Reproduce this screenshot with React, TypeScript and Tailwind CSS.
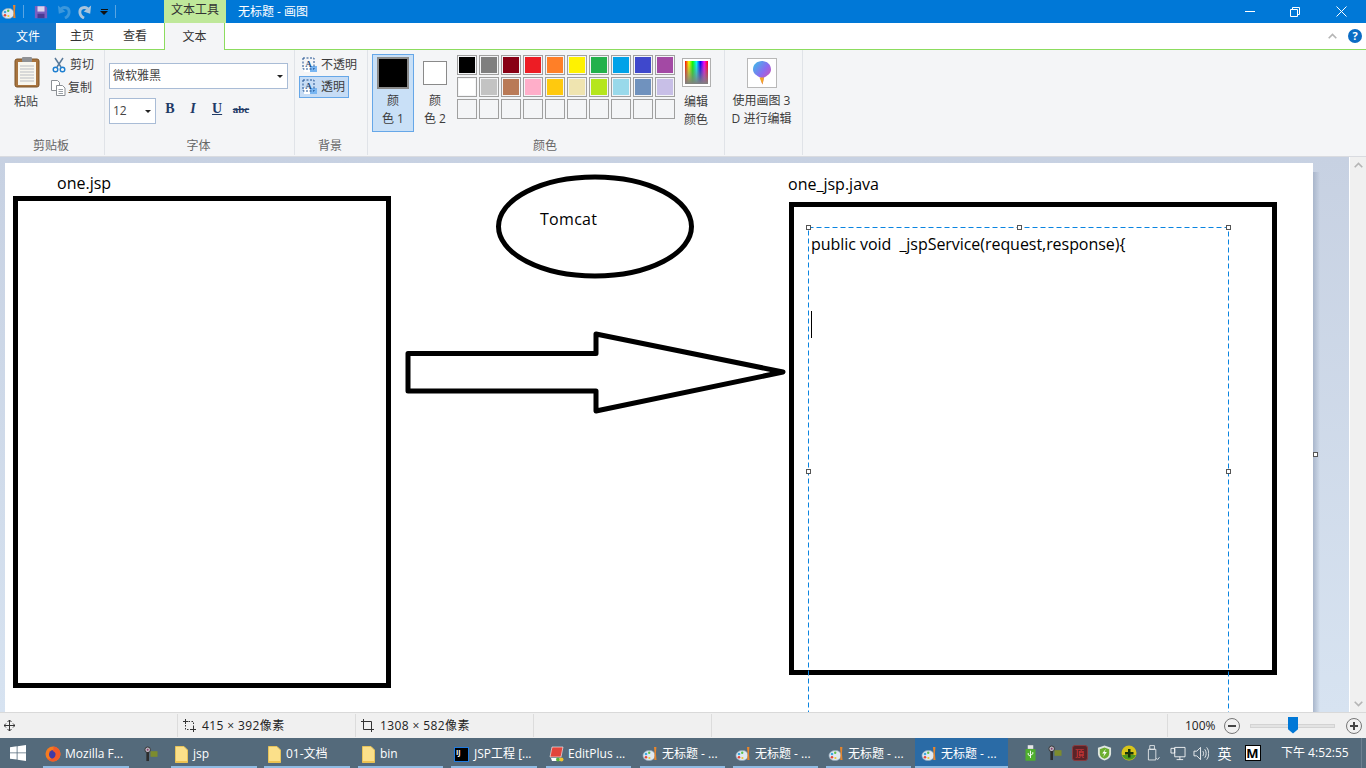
import React from 'react'

const font = 'font-["Open_Sans","Noto_Sans_CJK_SC",sans-serif]'

const paletteColors = [
  ['#000000', '#7f7f7f', '#880015', '#ed1c24', '#ff7f27', '#fff200', '#22b14c', '#00a2e8', '#3f48cc', '#a349a4'],
  ['#ffffff', '#c3c3c3', '#b97a57', '#ffaec9', '#ffc90e', '#efe4b0', '#b5e61d', '#99d9ea', '#7092be', '#c8bfe7'],
  ['', '', '', '', '', '', '', '', '', ''],
]

function PaintIcon({ className }: { className?: string }) {
  return (
    <svg viewBox="0 0 16 16" className={className}>
      <path d="M1 9.500C1 6.500 4 4.500 7.500 4.500S13 6.500 13 9.500 10.500 14.500 7 14.500 1 12.500 1 9.500z" fill="#dfe9f2" stroke="#8ea3b5" strokeWidth="0.7" />
      <circle cx="4" cy="8" r="1.3" fill="#3fa9e0" />
      <circle cx="7.2" cy="6.8" r="1.2" fill="#5fbf4a" />
      <circle cx="4" cy="11.2" r="1.3" fill="#e2483d" />
      <circle cx="7.4" cy="12" r="1.1" fill="#f0c330" />
      <path d="M12 1h2.400l-.5 6.500 .6 6.500h-2.200l.3-6.500z" fill="#e8862c" />
    </svg>
  )
}

function FolderIcon() {
  return (
    <svg viewBox="0 0 13 17" className="w-[13px] h-[17px]">
      <path d="M.5.5h8.500l3.500 3.500v12.500H.5z" fill="#fbe08a" stroke="#e6c25a" />
      <path d="M.5 15h12v1.500H.5z" fill="#eec24f" />
    </svg>
  )
}

function KeyIcon() {
  return (
    <svg viewBox="0 0 16 16" className="w-[15px] h-[16px]">
      <circle cx="5" cy="3.500" r="3" fill="#bdb6c0" stroke="#333" />
      <rect x="3.600" y="6" width="2.800" height="9.500" fill="#2c2c2c" />
      <rect x="8" y="5" width="7.500" height="6" fill="#7d8c2e" />
      <circle cx="5" cy="3.500" r="1" fill="#8a3d6b" />
    </svg>
  )
}

function ChevronIcon({ down, className }: { down?: boolean; className?: string }) {
  return (
    <svg viewBox="0 0 9 6" className={className}>
      <path d={down ? 'M.7 .8 4.500 4.600 8.300 .8' : 'M.7 5.200 4.500 1.400 8.300 5.200'} fill="none" stroke="#b5b5b5" strokeWidth="1.6" />
    </svg>
  )
}

function UndoIcon({ color, className }: { color: string; className: string }) {
  return (
    <svg viewBox="0 0 14 16" className={className}>
      <path d="M4 5c4-2.500 8.500-1 8.500 3.500 0 3-1.500 5-4.500 6.500" fill="none" stroke={color} strokeWidth="3" />
      <path d="M.5 1.500l1 9 7-2.500z" fill={color} />
    </svg>
  )
}

function Combo({ className, label }: { className: string; label: string }) {
  return (
    <div className={`flex items-center justify-between bg-white border border-[#a9bcd6] text-[12px] text-[#444] ${className}`}>
      <span>{label}</span>
      <span className="w-0 h-0 border-x-[3px] border-x-transparent border-t-[3px] border-t-[#222]" />
    </div>
  )
}

function TextModeIcon() {
  return (
    <svg viewBox="0 0 16 16" className="w-[16px] h-[16px]">
      <rect x="2" y="9" width="12" height="6" fill="#fff" />
      <rect x="8" y="9" width="7" height="6" fill="#79b6f2" />
      <rect x="1" y="1" width="11" height="11" fill="none" stroke="#1d4f8f" strokeDasharray="2 1.5" />
      <text x="3.200" y="10" fontSize="9" fontWeight="700" fontFamily="Liberation Serif" fill="#244a78">A</text>
    </svg>
  )
}

function RibbonGroup({ width, label, children }: { width: string; label: string; children: React.ReactNode }) {
  return (
    <div className={`relative flex flex-col h-full border-r border-[#e0e3e8] ${width}`}>
      <div className="flex-1 min-h-0">{children}</div>
      <div className="h-[21px] pr-[2px] text-center text-[12px] leading-[24px] text-[#666]">{label}</div>
    </div>
  )
}

function TitleBar() {
  return (
    <div className="h-[23px] shrink-0 flex items-center bg-[#0078d7]">
      <PaintIcon className="w-[16px] h-[16px] ml-[1px]" />
      <div className="w-px h-[13px] bg-[#5aa5e2] ml-[6px]" />
      <svg viewBox="0 0 16 16" className="w-[14px] h-[14px] ml-[10px]">
        <path d="M1 1h12l2 2v12H1z" fill="#7a5fc0" />
        <rect x="4" y="1.500" width="8" height="6" fill="#d9d4ee" />
        <rect x="4" y="10" width="8" height="5" fill="#4a3a92" />
      </svg>
      <UndoIcon color="#3b97dc" className="w-[14px] h-[15px] ml-[9px]" />
      <UndoIcon color="#a9c4dc" className="w-[14px] h-[15px] ml-[7px] -scale-x-100" />
      <div className="ml-[8px] flex flex-col items-center gap-[1px]">
        <div className="w-[7px] h-px bg-[#111]" />
        <div className="w-0 h-0 border-x-[4px] border-x-transparent border-t-[4px] border-t-[#111]" />
      </div>
      <div className="w-px h-[13px] bg-[#5aa5e2] ml-[7px]" />
      <div className="w-[62px] h-full ml-[48px] bg-[#bfe89a] text-center text-[12px] leading-[20px] text-[#333]">文本工具</div>
      <div className="ml-[12px] text-[12px] text-white whitespace-pre">无标题 - 画图</div>
      <div className="ml-auto flex items-center h-full">
        <div className="w-[10px] h-px bg-white mr-[35px]" />
        <svg viewBox="0 0 10 10" className="w-[10px] h-[10px] mr-[36px]">
          <path d="M2.500 2.500V.5h7v7h-2M.5 2.500h7v7h-7z" fill="none" stroke="#fff" />
        </svg>
        <svg viewBox="0 0 11 11" className="w-[11px] h-[11px] mr-[19px]">
          <path d="M.5 .5l10 10M10.500 .5l-10 10" stroke="#fff" />
        </svg>
      </div>
    </div>
  )
}

function TabRow() {
  return (
    <div className="h-[27px] shrink-0 flex items-stretch bg-white border-b border-[#8cdc5e] text-[12px] text-[#333]">
      <div className="w-[56px] -mb-px bg-[#1979ca] text-white flex items-center justify-center">文件</div>
      <div className="w-[52px] flex items-center justify-center">主页</div>
      <div className="w-[54px] flex items-center justify-center">查看</div>
      <div className="w-[61px] ml-[2px] -mb-px bg-[#f4f5f7] border-x border-[#8cdc5e] flex items-center justify-center">文本</div>
      <div className="ml-auto flex items-center pr-[4px]">
        <ChevronIcon className="w-[9px] h-[6px] mr-[11px]" />
        <div className="w-[14px] h-[14px] rounded-full bg-[#0b6cc4] text-white text-[11px] font-bold leading-[14px] text-center">?</div>
      </div>
    </div>
  )
}

function Ribbon() {
  return (
    <div className="h-[107px] shrink-0 flex bg-[#f4f5f7] border-b border-[#d9dbe0] pb-[1px] text-[12px] text-[#3c3c3c] leading-[18px]">
      <RibbonGroup width="w-[105px]" label="剪贴板">
        <div className="flex pt-[7px]">
          <div className="w-[52px] flex flex-col items-center">
            <svg viewBox="0 0 26 32" className="w-[26px] h-[32px] ml-[2px] -mt-px">
              <rect x="1" y="3" width="24" height="28" rx="2" fill="#a8743f" stroke="#7d5428" />
              <rect x="4" y="6" width="18" height="23" fill="#f8f6ee" />
              <path d="M6 10h14M6 13h14M6 16h14M6 19h14M6 22h14M6 25h14" stroke="#b9bcc2" />
              <rect x="8" y="1" width="10" height="5" rx="1" fill="#8f9296" />
            </svg>
            <span className="mt-[5px]">粘贴</span>
          </div>
          <div className="flex flex-col gap-[4px]">
            <div className="flex items-center gap-[4px] h-[18px] -mt-px">
              <svg viewBox="0 0 14 16" className="w-[14px] h-[16px]">
                <path d="M3 1l6 9M11 1L5 10" stroke="#5a7a99" strokeWidth="1.500" />
                <circle cx="3.500" cy="12.500" r="2.300" fill="none" stroke="#1c7ed0" strokeWidth="1.400" />
                <circle cx="10.500" cy="12.500" r="2.300" fill="none" stroke="#1c7ed0" strokeWidth="1.400" />
              </svg>
              <span>剪切</span>
            </div>
            <div className="flex items-center gap-[2px] h-[18px] -ml-[2px] mt-px">
              <svg viewBox="0 0 16 16" className="w-[16px] h-[16px]">
                <path d="M1.500 .5h6l2 2v8h-8z" fill="#fff" stroke="#8b8f94" />
                <path d="M6.500 5.500h6l2.500 2.500v7.500h-8.500z" fill="#fff" stroke="#8b8f94" />
                <path d="M8.500 9.500h4.500M8.500 11.500h4.500M8.500 13.500h4.500" stroke="#9aa0a6" />
              </svg>
              <span>复制</span>
            </div>
          </div>
        </div>
      </RibbonGroup>
      <RibbonGroup width="w-[190px]" label="字体">
        <div className="pl-[4px] pt-[13px]">
          <Combo className="w-[179px] h-[26px] pl-[3px] pr-[4px]" label="微软雅黑" />
          <div className="flex items-center mt-[9px]">
            <Combo className="w-[47px] h-[26px] pl-[3px] pr-[4px]" label="12" />
            <div className="ml-[9px] -mt-[4px] flex items-center text-[#1f3a66] font-['Liberation_Serif',serif] font-bold text-[14px]">
              <span className="w-[10px] text-center">B</span>
              <span className="w-[10px] text-center italic ml-[13px]">I</span>
              <span className="w-[10px] text-center underline ml-[14px]">U</span>
              <span className="w-[18px] text-center line-through ml-[10px] text-[11px]">abc</span>
            </div>
          </div>
        </div>
      </RibbonGroup>
      <RibbonGroup width="w-[73px]" label="背景">
        <div className="pl-[4px] pt-[4px]">
          <div className="flex items-center gap-[3px] h-[22px] pl-[3px]">
            <TextModeIcon />
            <span>不透明</span>
          </div>
          <div className="flex items-center gap-[3px] h-[22px] w-[50px] pl-[2px] bg-[#c6dcf5] border border-[#66a7e8]">
            <TextModeIcon />
            <span>透明</span>
          </div>
        </div>
      </RibbonGroup>
      <RibbonGroup width="w-[357px]" label="颜色">
        <div className="flex pt-[4px] pl-[4px]">
          <div className="w-[42px] h-[78px] bg-[#c9e0f7] border border-[#66a7e8] flex flex-col items-center pt-[2px]">
            <div className="w-[32px] h-[32px] bg-black border-2 border-[#8a8a8a] outline outline-1 outline-[#c9e0f7]" />
            <span className="mt-[3px] text-center">颜<br />色 1</span>
          </div>
          <div className="w-[40px] flex flex-col items-center pt-[7px] ml-[1px]">
            <div className="w-[24px] h-[24px] bg-white border border-[#8a8a8a]" />
            <span className="mt-[7px] text-center">颜<br />色 2</span>
          </div>
          <div className="ml-[2px] mt-[1px] flex flex-col gap-[2px]">
            {paletteColors.map((row, r) => (
              <div key={r} className="flex gap-[2px]">
                {row.map((color, c) => (
                  <div key={c} className="w-[20px] h-[20px] border border-[#a0a0a0] p-[1px]">
                    {color && <div className="w-full h-full" style={{ backgroundColor: color }} />}
                  </div>
                ))}
              </div>
            ))}
          </div>
          <div className="w-[38px] ml-[2px] flex flex-col items-center pt-[4px]">
            <div className="w-[29px] h-[29px] border border-[#b0b0b0] p-[2px] bg-white">
              <div className="w-full h-full bg-[linear-gradient(to_bottom,transparent,#808080),linear-gradient(to_right,#ff0000,#ffff00,#00ff00,#00ffff,#0000ff,#ff00ff,#ff0000)]" />
            </div>
            <span className="mt-[6px] text-center">编辑<br />颜色</span>
          </div>
        </div>
      </RibbonGroup>
      <RibbonGroup width="w-[78px]" label="">
        <div className="flex flex-col items-center pt-[8px] pr-[4px]">
          <div className="w-[30px] h-[30px] bg-white border border-[#b8b8b8] flex items-center justify-center">
            <svg viewBox="0 0 20 26" className="w-[20px] h-[26px]">
              <defs>
                <linearGradient id="drop" x1="0" y1="0" x2="1" y2="1">
                  <stop offset="0" stopColor="#35c3e8" />
                  <stop offset="0.5" stopColor="#8a6cf0" />
                  <stop offset="1" stopColor="#f0479a" />
                </linearGradient>
              </defs>
              <path d="M10 1c5 0 9 3.500 9 8.500 0 4-4 6.500-7 8l-1.500 7c-1-1.500-1.500-5-2-7C5 16 1 13.500 1 9.500 1 4.500 5 1 10 1z" fill="url(#drop)" />
              <path d="M7.500 17.500l3 7 1.500-7z" fill="#f5a623" />
            </svg>
          </div>
          <span className="mt-[4px] text-center whitespace-nowrap">使用画图 3<br />D 进行编辑</span>
        </div>
      </RibbonGroup>
    </div>
  )
}

function Handle({ className }: { className: string }) {
  return <div className={`absolute w-[5px] h-[5px] bg-white border border-[#555] ${className}`} />
}

function Workspace() {
  return (
    <div className="flex-1 min-h-0 flex">
      <div className="relative flex-1 pt-[6px] pl-[5px] bg-[linear-gradient(to_bottom,#c7d1e2,#d7e3f1)] overflow-hidden">
        <div className="absolute left-[1313px] top-[15px] bottom-0 w-[7px] bg-[linear-gradient(to_right,#a9b6cb,transparent)]" />
        <div className={`relative w-[1308px] h-full bg-white text-black ${font}`}>
          {/* coordinates inside the paper: the drawing is a free canvas */}
          <svg className="absolute left-0 top-0 w-[1308px] h-[549px]" viewBox="0 0 1308 549">
            <rect x="10.500" y="35.500" width="373" height="487" fill="none" stroke="#000" strokeWidth="5" />
            <ellipse cx="590" cy="63.500" rx="96.500" ry="49.500" fill="none" stroke="#000" strokeWidth="5" />
            <path d="M403 190.500H591V171L778 209 591 248V228H403Z" fill="none" stroke="#000" strokeWidth="5" strokeLinejoin="round" />
            <rect x="786.500" y="41.500" width="483" height="468" fill="none" stroke="#000" strokeWidth="5" />
            <rect x="803.500" y="64.500" width="420" height="500" fill="none" stroke="#0a84e0" strokeDasharray="5 3" />
          </svg>
          <span className="absolute left-[52px] top-[9px] text-[16px] leading-[22px]">one.jsp</span>
          <span className="absolute left-[535px] top-[45px] text-[16px] leading-[22px] tracking-[0.3px]">Tomcat</span>
          <span className="absolute left-[783px] top-[10px] text-[16px] leading-[22px]">one_jsp.java</span>
          <span className="absolute left-[806px] top-[70px] text-[16px] leading-[22px] tracking-[-0.05px] whitespace-pre">public void  _jspService(request,response){'{'}</span>
          <div className="absolute left-[806px] top-[148px] w-px h-[27px] bg-black" />
          <Handle className="left-[801px] top-[62px]" />
          <Handle className="left-[1012px] top-[62px]" />
          <Handle className="left-[1221px] top-[62px]" />
          <Handle className="left-[801px] top-[306px]" />
          <Handle className="left-[1221px] top-[306px]" />
          <Handle className="left-[1308px] top-[289px]" />
        </div>
      </div>
      <div className="w-[17px] shrink-0 flex flex-col items-center justify-between py-[5px] bg-[#f0f0f0] border-l border-white">
        <ChevronIcon className="w-[9px] h-[6px]" />
        <ChevronIcon down className="w-[9px] h-[6px]" />
      </div>
    </div>
  )
}

function StatusBar() {
  return (
    <div className={`h-[26px] shrink-0 flex items-stretch bg-[#f0f0f0] border-t border-[#d9d9d9] text-[12px] text-[#222] ${font}`}>
      <div className="w-[178px] flex items-center pl-[4px] border-r border-[#dcdcdc] my-[1px]">
        <svg viewBox="0 0 11 11" className="w-[11px] h-[11px]">
          <path d="M5.500 0v11M0 5.500h11M3.500 2l2-2 2 2M3.500 9l2 2 2-2M2 3.500l-2 2 2 2M9 3.500l2 2-2 2" fill="none" stroke="#333" />
        </svg>
      </div>
      <div className="w-[178px] flex items-center pl-[5px] gap-[6px] border-r border-[#dcdcdc] my-[1px]">
        <svg viewBox="0 0 13 13" className="w-[13px] h-[13px]">
          <path d="M2.500 2.500h8v8h-8z" fill="none" stroke="#333" strokeDasharray="1.500 1.500" />
          <path d="M2.500 0v5M0 2.500h5M10.500 8v5M8 10.500h5" stroke="#333" />
        </svg>
        <span className="whitespace-pre tracking-[0.4px]">415 × 392像素</span>
      </div>
      <div className="w-[178px] flex items-center pl-[5px] gap-[6px] border-r border-[#dcdcdc] my-[1px]">
        <svg viewBox="0 0 13 13" className="w-[13px] h-[13px]">
          <path d="M2.500 2.500h8v8h-8z" fill="none" stroke="#333" />
          <path d="M2.500 0v5M0 2.500h5M10.500 8v5M8 10.500h5" stroke="#333" />
        </svg>
        <span className="whitespace-pre tracking-[0.4px]">1308 × 582像素</span>
      </div>
      <div className="w-[178px] border-r border-[#dcdcdc] my-[1px]" />
      <div className="w-[456px] border-r border-[#dcdcdc] my-[1px]" />
      <div className="flex-1 flex items-center pl-[17px]">
        <span className="w-[32px]">100%</span>
        <div className="ml-[7px] w-[16px] h-[16px] rounded-full border border-[#777] flex items-center justify-center">
          <div className="w-[8px] h-[2px] bg-[#444]" />
        </div>
        <div className="relative ml-[10px] w-[85px] h-[4px] bg-[#e3e3e3] border border-[#d3d3d3]">
          <div className="absolute left-[37px] -top-[8px] w-[10px] h-[17px] bg-[#0078d7] [clip-path:polygon(0_0,100%_0,100%_75%,50%_100%,0_75%)]" />
        </div>
        <div className="ml-[11px] w-[16px] h-[16px] rounded-full border border-[#777] relative flex items-center justify-center">
          <div className="w-[8px] h-[2px] bg-[#444]" />
          <div className="absolute w-[2px] h-[8px] bg-[#444]" />
        </div>
      </div>
    </div>
  )
}

function TaskItem({ className, icon, label }: { className: string; icon: React.ReactNode; label: string }) {
  return (
    <div className={`h-full flex items-center pt-[4px] border-b-2 border-[#8fbbe3] whitespace-pre ${className}`}>
      {icon}
      <span>{label}</span>
    </div>
  )
}

function Taskbar() {
  const paint = <PaintIcon className="w-[16px] h-[16px] shrink-0" />
  return (
    <div className={`h-[30px] shrink-0 flex items-center bg-[#546a7b] text-white text-[12px] ${font}`}>
      <div className="w-[43px] h-full flex items-center justify-center pr-[8px]">
        <svg viewBox="0 0 16 16" className="w-[16px] h-[16px]">
          <path d="M0 2.300 6.700 1.300v6.200H0zM7.500 1.200 16 0v7.500H7.500zM0 8.300h6.700v6.300L0 13.700zM7.500 8.300H16V16l-8.500-1.200z" fill="#fff" />
        </svg>
      </div>
      <TaskItem
        className="w-[86px] pl-[2px] gap-[4px]"
        label="Mozilla F..."
        icon={
          <svg viewBox="0 0 16 16" className="w-[16px] h-[16px] shrink-0">
            <circle cx="8" cy="8" r="7.500" fill="#f47b20" />
            <circle cx="8.500" cy="8.500" r="4.500" fill="#3f3aa6" />
            <path d="M8 .5c4 0 7.500 3.500 7.500 7.500 0 4-3.500 7.500-7.500 7.500-3 0-5-1.500-6-3.500 3 2 8 1 8.500-3 .5-2-1-3.500-3-4 1-1 1.500-3 .5-4.500z" fill="#f15a29" />
          </svg>
        }
      />
      <div className="w-[42px] h-full flex items-center pl-[14px] pt-[1px]">
        <KeyIcon />
      </div>
      <TaskItem className="w-[86px] pl-[4px] gap-[5px]" label="jsp" icon={<FolderIcon />} />
      <TaskItem className="w-[86px] ml-[7px] pl-[4px] gap-[5px]" label="01-文档" icon={<FolderIcon />} />
      <TaskItem className="w-[85px] ml-[8px] pl-[4px] gap-[5px]" label="bin" icon={<FolderIcon />} />
      <TaskItem
        className="w-[86px] ml-[8px] pl-[3px] gap-[5px]"
        label="JSP工程 [..."
        icon={
          <div className="w-[15px] h-[15px] shrink-0 bg-black border border-[#1f7be0] text-[7px] leading-[9px] font-bold pl-[1px]">IJ</div>
        }
      />
      <TaskItem
        className="w-[85px] ml-[9px] pl-[3px] gap-[4px]"
        label="EditPlus ..."
        icon={
          <svg viewBox="0 0 15 16" className="w-[15px] h-[16px] shrink-0">
            <path d="M3 1h11L12 11H1z" fill="#e2453c" stroke="#fff" strokeWidth="0.600" />
            <path d="M2 12h10v3H3z" fill="#fff" />
            <circle cx="9" cy="13.500" r="2" fill="#5fae3c" />
            <circle cx="12.500" cy="13.500" r="2" fill="#f0c330" />
          </svg>
        }
      />
      <TaskItem className="w-[85px] ml-[9px] pl-[2px] gap-[4px]" label="无标题 - ..." icon={paint} />
      <TaskItem className="w-[85px] ml-[8px] pl-[2px] gap-[4px]" label="无标题 - ..." icon={paint} />
      <TaskItem className="w-[85px] ml-[8px] pl-[2px] gap-[4px]" label="无标题 - ..." icon={paint} />
      <TaskItem className="w-[93px] ml-[4px] pl-[6px] gap-[4px] bg-[#2a6ba6]" label="无标题 - ..." icon={paint} />
      <div className="w-[10px]" />
      <div className="w-[24px] flex justify-center">
        <svg viewBox="0 0 12 17" className="w-[11px] h-[16px]">
          <rect x="3" y="0" width="6" height="4" fill="#e8e8e8" />
          <rect x=".5" y="4" width="11" height="13" rx="1" fill="#4fae2e" />
          <path d="M6 6v8M3.500 8.500v2L6 12M8.500 7.500v2L6 11" stroke="#fff" fill="none" />
        </svg>
      </div>
      <div className="w-[25px] flex justify-center"><KeyIcon /></div>
      <div className="w-[25px] flex justify-center">
        <div className="w-[16px] h-[16px] rounded-[3px] bg-[#5a2428] border border-[#8a3a3e] flex items-center justify-center text-[#e23b3b] text-[9px] leading-none">頂</div>
      </div>
      <div className="w-[25px] flex justify-center">
        <svg viewBox="0 0 16 17" className="w-[15px] h-[16px]">
          <path d="M8 .5l7 2.500v6c0 4-3.500 6.500-7 7.500-3.500-1-7-3.500-7-7.500V3z" fill="#dfe6df" />
          <path d="M8 2.500l5 2v4.500c0 3-2.500 4.800-5 5.500-2.500-.7-5-2.500-5-5.500V4.500z" fill="#6cae2f" />
          <path d="M9.500 4 5.500 9h2.500l-1.500 4 4-5.500H8z" fill="#fff" />
        </svg>
      </div>
      <div className="w-[24px] flex justify-center">
        <svg viewBox="0 0 16 16" className="w-[16px] h-[16px]">
          <circle cx="8" cy="8" r="7.500" fill="#d8c51a" />
          <path d="M1 10a7.500 7.500 0 0 0 14 0z" fill="#4d9a1e" />
          <path d="M7 4h2.500v3H12.500v2.500H9.500v3H7v-3H4V7h3z" fill="#17350b" />
        </svg>
      </div>
      <div className="w-[24px] flex justify-center">
        <svg viewBox="0 0 14 17" className="w-[13px] h-[16px]" fill="none" stroke="#fff">
          <path d="M3 .5h5v4H3zM1.500 4.500h8v11.500h-8zM10 14l1.500 1.500L13.500 13" strokeWidth="0.800" />
        </svg>
      </div>
      <div className="w-[25px] flex justify-center">
        <svg viewBox="0 0 16 16" className="w-[16px] h-[15px]" fill="none" stroke="#fff">
          <path d="M.5 2.500h4v5h-4zM4.500 1.500h11v10h-11zM10 11.500v3M6.500 14.500h7" strokeWidth="0.900" />
        </svg>
      </div>
      <div className="w-[22px] flex justify-center">
        <svg viewBox="0 0 16 16" className="w-[16px] h-[15px]" fill="none" stroke="#fff">
          <path d="M.5 5.500h3l4-4v13l-4-4h-3zM10 5.500c1 1.500 1 3.500 0 5M12 3.500c2 2.500 2 6.500 0 9M14 1.500c3 3.500 3 9.500 0 13" strokeWidth="0.900" />
        </svg>
      </div>
      <div className="w-[25px] text-center text-[14px]">英</div>
      <div className="w-[31px] flex justify-center">
        <div className="w-[16px] h-[16px] bg-white border border-black text-black text-[13px] font-bold leading-[14px] text-center">M</div>
      </div>
      <div className="ml-[13px] whitespace-pre">下午 4:52:55</div>
      <div className="ml-auto mr-[4px] w-px h-full bg-[#6d8090]" />
    </div>
  )
}

export default function App() {
  return (
    <div className={`w-[1366px] h-[768px] flex flex-col overflow-hidden ${font}`}>
      <TitleBar />
      <TabRow />
      <Ribbon />
      <Workspace />
      <StatusBar />
      <Taskbar />
    </div>
  )
}
